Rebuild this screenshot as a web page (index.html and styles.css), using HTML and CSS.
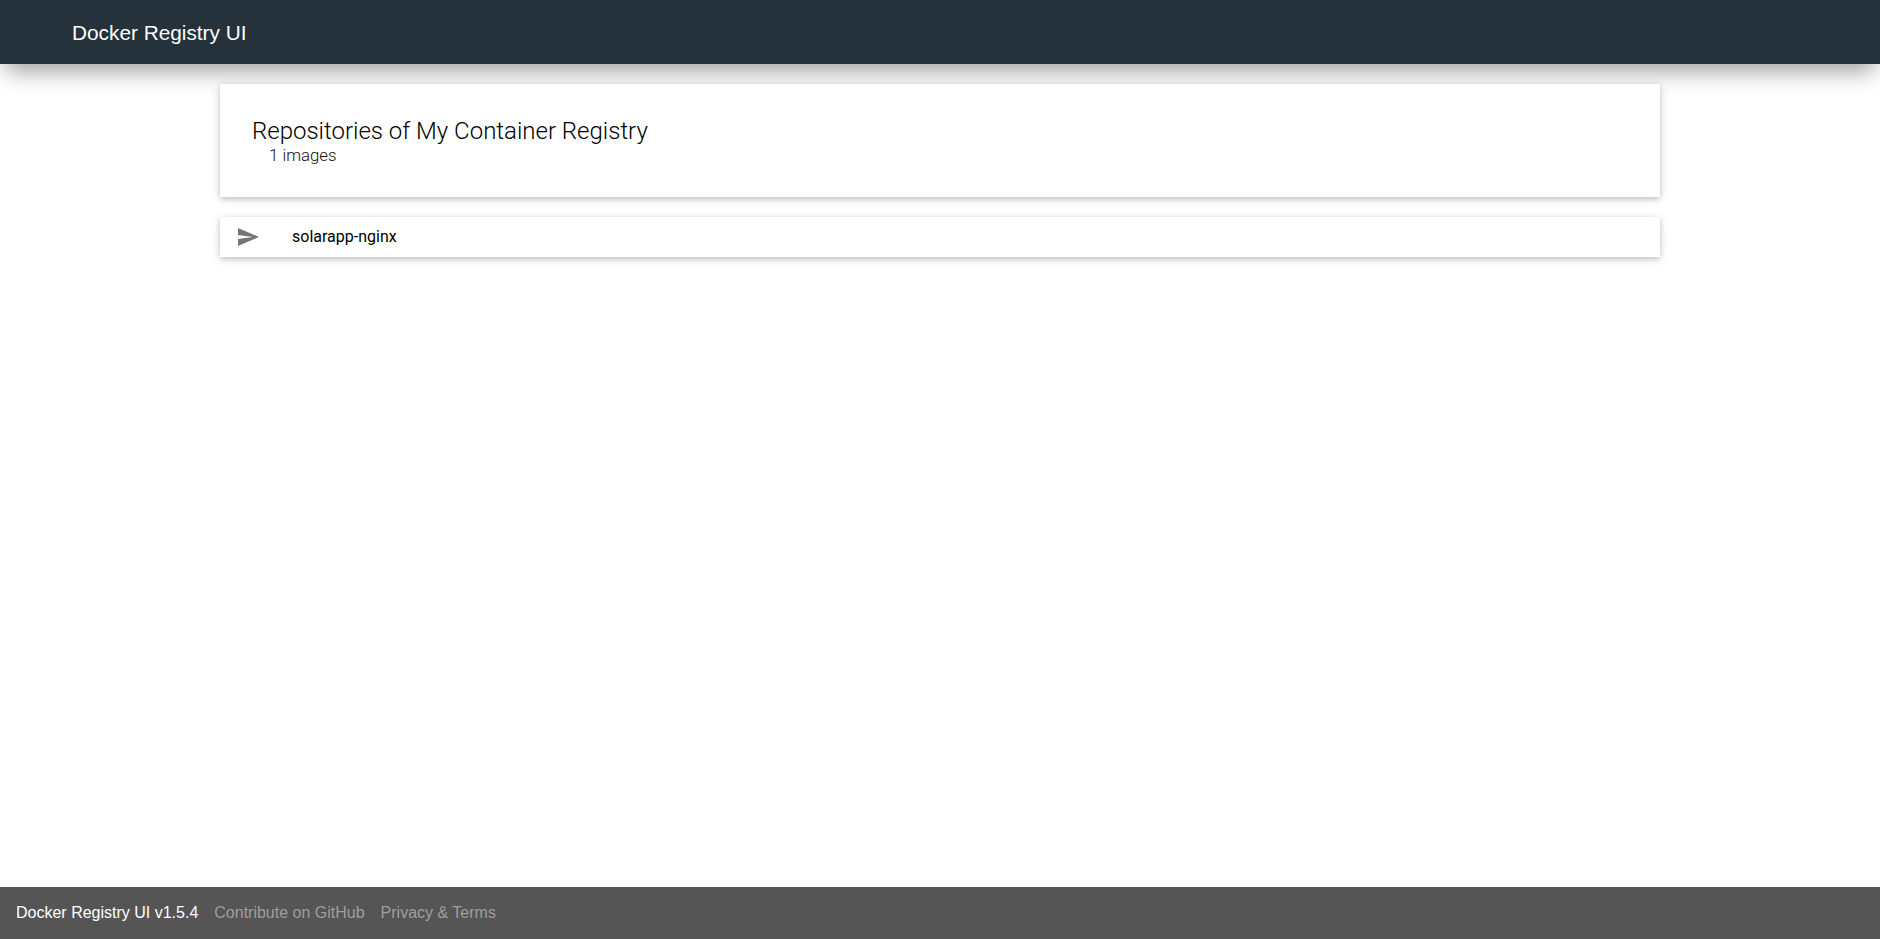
FILE: index.html
```
<!DOCTYPE html>
<html lang="en">
<head>
<meta charset="utf-8">
<title>Docker Registry UI</title>
<link rel="stylesheet" href="styles.css">
</head>
<body>
<header class="navbar"><span class="brand">Docker Registry UI</span></header>
<main class="content">
  <section class="card heading-card">
    <h2 class="title">Repositories of My Container Registry</h2>
    <div class="count">1 images</div>
  </section>
  <ul class="card list">
    <li class="item">
      <svg class="send" viewBox="0 0 24 24" width="24" height="24" aria-hidden="true"><path d="M2.01 21L23 12 2.01 3 2 10l15 2-15 2z"/></svg>
      <span class="name">solarapp-nginx</span>
    </li>
  </ul>
</main>
<footer class="footer">
  <span class="version">Docker Registry UI v1.5.4</span>
  <a class="link">Contribute on GitHub</a>
  <a class="link">Privacy &amp; Terms</a>
</footer>
</body>
</html>
```
FILE: styles.css
```
* { box-sizing: border-box; }
html, body { height: 100%; }
body {
  margin: 0;
  display: flex;
  flex-direction: column;
  background: #fff;
  font-family: Roboto, sans-serif;
  overflow: hidden;
}
.navbar {
  flex: none;
  height: 64px;
  padding: 2px 0 0 72px;
  display: flex;
  align-items: center;
  background: #25313b;
  color: #fff;
  box-shadow: 0 14px 22px -6px rgba(0,0,0,.36);
}
.brand {
  font-family: "Liberation Sans", Arial, sans-serif;
  font-size: 20.8px;
  font-weight: 400;
}
.content {
  flex: 1;
  width: 1440px;
  margin: 0 auto;
  padding-top: 20px;
}
.card {
  background: #fff;
  box-shadow: 0 2px 5px 0 rgba(0,0,0,.16), 0 2px 10px 0 rgba(0,0,0,.12);
}
.heading-card {
  height: 113px;
  padding: 33px 32px 0;
}
.title {
  margin: 0;
  font-size: 24px;
  font-weight: 300;
  line-height: 28px;
  color: #000;
}
.count {
  margin-left: 17px;
  font-size: 16.8px;
  font-weight: 300;
  line-height: 21px;
  color: #111;
}
.list {
  list-style: none;
  margin: 20px 0 0;
  padding: 0;
}
.item {
  height: 40px;
  padding-left: 16px;
  display: flex;
  align-items: center;
}
.send { fill: #757575; flex: none; }
.name {
  margin: -2px 0 0 32px;
  font-size: 16px;
  color: #000;
}
.footer {
  flex: none;
  height: 52px;
  padding: 0 16px;
  display: flex;
  align-items: center;
  gap: 16px;
  background: #555;
  font-family: "Liberation Sans", Arial, sans-serif;
  font-size: 16px;
}
.version { color: #fff; }
.link { color: #9e9e9e; }
```
